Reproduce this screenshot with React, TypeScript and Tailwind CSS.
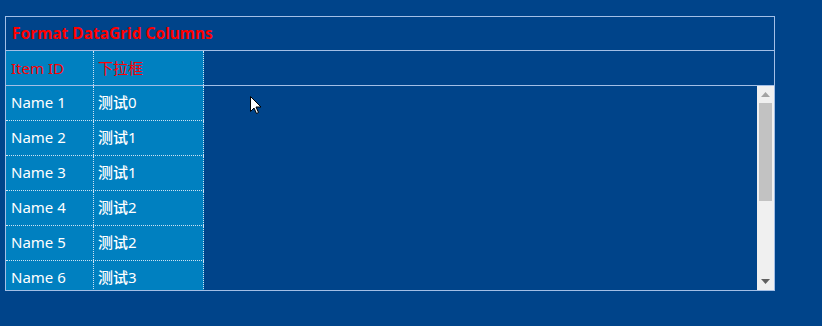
const rows = [
  { id: 'Name 1', value: '测试0' },
  { id: 'Name 2', value: '测试1' },
  { id: 'Name 3', value: '测试1' },
  { id: 'Name 4', value: '测试2' },
  { id: 'Name 5', value: '测试2' },
  { id: 'Name 6', value: '测试3' },
];

const font = { fontFamily: '"Noto Sans", "Noto Sans CJK SC", sans-serif' };

function Cursor() {
  return (
    <svg className="absolute left-[250px] top-[96px]" width="12" height="19" viewBox="0 0 12 19">
      <path d="M0.5 0.5 L0.5 15.5 L4 12 L6.5 17.5 L8.5 16.5 L6 11 L11 11 Z" fill="#fff" stroke="#000" strokeWidth="1" />
    </svg>
  );
}

export default function App() {
  return (
    <div className="relative w-[822px] h-[326px] bg-[#00448a] pt-[16px] pl-[5px]" style={font}>
      <div className="w-[770px] h-[275px] border border-[#a3bfe6] flex flex-col">
        {/* title */}
        <div className="h-[34px] shrink-0 border-b border-[#a3bfe6] flex items-center pl-[6px]">
          <span className="text-[15.5px] font-bold text-[#ff0000]">Format DataGrid Columns</span>
        </div>

        {/* header */}
        <div className="h-[35px] shrink-0 border-b border-[#a3bfe6] flex">
          <div className="w-[88px] bg-[#0080c0] border-r border-dotted border-[#cfe3f3] flex items-center pl-[5px] text-[15px] text-[#ff0000]">
            Item ID
          </div>
          <div className="w-[110px] bg-[#0080c0] border-r border-dotted border-[#cfe3f3] flex items-center pl-[4px] text-[15px] text-[#ff0000]">
            下拉框
          </div>
        </div>

        {/* body */}
        <div className="flex-1 flex overflow-hidden">
          <div className="w-[198px] flex flex-col">
            {rows.map((r) => (
              <div key={r.id} className="h-[35px] shrink-0 flex border-b border-dotted border-[#cfe3f3] bg-[#0080c0]">
                <div className="w-[88px] border-r border-dotted border-[#cfe3f3] flex items-center pl-[5px] pb-[1px] text-[15px] font-[450] text-white">
                  {r.id}
                </div>
                <div className="w-[110px] border-r border-dotted border-[#cfe3f3] flex items-center pl-[4px] pb-[1px] text-[15px] font-[450] text-white">
                  {r.value}
                </div>
              </div>
            ))}
          </div>
          <div className="flex-1" />
          <div className="w-[17px] bg-[#f0f0f0] flex flex-col items-center">
            <div className="h-[17px] w-full flex items-center justify-center">
              <svg width="9" height="5" viewBox="0 0 9 5">
                <path d="M4.5 0 L9 5 L0 5 Z" fill="#a3a3a3" />
              </svg>
            </div>
            <div className="w-[13px] h-[98px] bg-[#c2c2c2]" />
            <div className="flex-1" />
            <div className="h-[17px] w-full flex items-center justify-center">
              <svg width="9" height="5" viewBox="0 0 9 5">
                <path d="M0 0 L9 0 L4.5 5 Z" fill="#606060" />
              </svg>
            </div>
          </div>
        </div>
      </div>
      <Cursor />
    </div>
  );
}
